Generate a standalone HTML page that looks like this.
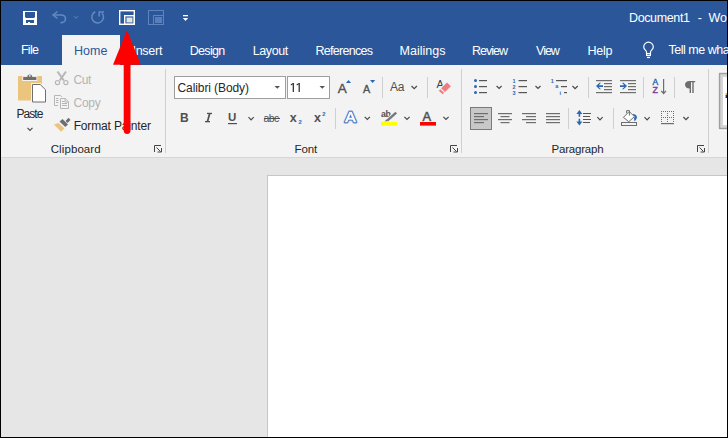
<!DOCTYPE html>
<html><head><meta charset="utf-8">
<style>
*{margin:0;padding:0;box-sizing:border-box}
html,body{width:728px;height:438px;overflow:hidden;background:#000}
body{position:relative;font-family:"Liberation Sans",sans-serif}
svg{position:absolute;left:0;top:0}
text{font-family:"Liberation Sans",sans-serif;white-space:pre}
</style></head><body>
<svg width="728" height="438" viewBox="0 0 728 438">
<!-- base -->
<rect x="0" y="0" width="728" height="438" fill="#000"/>
<rect x="1" y="1" width="726" height="436" fill="#e6e6e6"/>
<rect x="1" y="1" width="726" height="64" fill="#2b579a"/>
<rect x="1" y="65" width="726" height="92" fill="#f3f3f3"/>
<rect x="1" y="157" width="726" height="1" fill="#d6d6d6"/>
<rect x="62" y="35" width="58" height="30" fill="#f3f3f3"/>
<!-- page -->
<rect x="267" y="175" width="460" height="262" fill="#c6c6c6"/>
<rect x="268" y="176" width="459" height="261" fill="#fff"/>
<g id="qat">
  <!-- save -->
  <rect x="23" y="11" width="14" height="14" fill="#fff"/>
  <path d="M25 12 H35 V17 L34 18 H26 L25 17 Z" fill="#2b579a"/>
  <rect x="26" y="20" width="8" height="3" fill="#2b579a"/>
  <rect x="28" y="22" width="2" height="1" fill="#fff"/>
  <!-- undo -->
  <g fill="none" stroke="#6689c0" stroke-width="1.5">
    <path d="M57.5 11.5 L53 15 L57.5 18.5"/>
    <path d="M53 15 H61 C64 15 65.5 17 65.5 19 C65.5 21 63.5 22.8 60.5 22.8"/>
    <path d="M74 16.3 L76 18.3 L78 16.3" stroke-width="1"/>
  </g>
  <!-- redo circular -->
  <g fill="none" stroke="#6689c0" stroke-width="1.5">
    <path d="M95.3 11.8 A5.8 5.8 0 1 0 102 13.2"/>
    <path d="M104 12 H99.2 V16.5"/>
  </g>
  <!-- window icon 1 -->
  <g fill="none" stroke="#fff" stroke-width="1.4">
    <rect x="119.7" y="10.7" width="14.6" height="13.6"/>
    <rect x="124.7" y="15.7" width="9.6" height="8.6"/>
  </g>
  <rect x="126.5" y="17.5" width="6" height="5" fill="#e4e4e4"/>
  <!-- window icon 2 (disabled) -->
  <g fill="none" stroke="#5f84bd" stroke-width="1">
    <rect x="148.5" y="10.5" width="15" height="14"/>
    <rect x="153.5" y="15.5" width="10" height="9"/>
  </g>
  <rect x="155" y="17" width="7" height="6" fill="#5a7fb8"/>
  <!-- customize -->
  <rect x="183" y="15" width="5" height="1.3" fill="#fff"/>
  <path d="M182.8 18 H188.2 L185.5 21 Z" fill="#fff"/>
  <!-- bulb -->
  <g fill="none" stroke="#fff" stroke-width="1.2">
    <path d="M646.5 53.5 V52 C646.5 50.5 643.7 49.5 643.7 47 A4.8 4.8 0 0 1 653.3 47 C653.3 49.5 650.5 50.5 650.5 52 V53.5"/>
    <rect x="646.6" y="53.6" width="3.8" height="1.9"/>
  </g>
  <rect x="647" y="56.9" width="3" height="1.2" fill="#fff"/>
</g>
<g id="clipboard">
  <!-- paste -->
  <rect x="18" y="76" width="24" height="24.5" fill="#ebc47e"/>
  <path d="M22.3 81 V76.2 H26.5 A3.4 3.4 0 0 1 33.1 76.2 H37.3 V81 Z" fill="#f3f3f3"/>
  <path d="M23.2 80 V77 H27.3 A2.5 2.5 0 0 1 32.3 77 H36.4 V80 Z" fill="#6e6e6e"/>
  <circle cx="29.8" cy="75.8" r="0.9" fill="#f3f3f3"/>
  <path d="M31 83 H40.8 L47 89.2 V103.5 H31 Z" fill="#f3f3f3"/>
  <path d="M32.5 84.5 H40.2 L45.5 89.8 V102 H32.5 Z" fill="#fff" stroke="#6e6e6e" stroke-width="1"/>
  <!-- paste chevron -->
  <path d="M27.5 127.8 L30 130.3 L32.5 127.8" fill="none" stroke="#4a4a4a" stroke-width="1.2"/>
  <!-- scissors -->
  <g fill="none" stroke="#b6b6b6">
    <path d="M57.5 71.5 L63.8 80.5" stroke-width="2"/>
    <path d="M66 71.5 L59.7 80.5" stroke-width="2"/>
    <circle cx="57.5" cy="82.6" r="2.1" stroke-width="1.2"/>
    <circle cx="65.9" cy="82.6" r="2.1" stroke-width="1.2"/>
  </g>
  <!-- copy -->
  <g fill="none" stroke="#b6b6b6" stroke-width="1">
    <path d="M54.5 105.5 V95.5 H60.5 L62 97"/>
    <path d="M58 105.5 H54.5"/>
    <path d="M56 98.5 H58.5 M56 100.5 H58.5 M56 102.5 H58.5"/>
    <path d="M60.5 108.5 V98.5 H65.3 L68.5 101.7 V108.5 Z" fill="#f3f3f3"/>
    <path d="M65 98.5 V102 H68.5"/>
    <path d="M62 101.5 H64.5 M62 103.5 H67 M62 105.5 H67"/>
  </g>
  <!-- format painter -->
  <path d="M54 124.5 L58.5 123 L64.5 128.5 L61 131.8 Z" fill="#ebc47e"/>
  <path d="M59.5 121.5 L62.5 119 L68 124.5 L65.3 127 Z" fill="#6e6e6e"/>
  <path d="M65.5 121 L68.5 117.8 L70.5 120 L67.5 123 Z" fill="#6e6e6e"/>
  <!-- launcher -->
  <g fill="none" stroke="#444" stroke-width="1">
    <path d="M154.5 152 V145.5 H161"/>
    <path d="M156.5 147.5 L160.5 151.5 M157.5 152 H161.5 V148"/>
  </g>
</g>
<g id="seps" fill="#cfcfcf">
  <rect x="165" y="69" width="1" height="84"/>
  <rect x="461" y="69" width="1" height="84"/>
  <rect x="708" y="69" width="1" height="84"/>
  <rect x="382" y="77" width="1" height="21"/>
  <rect x="427" y="77" width="1" height="21"/>
  <rect x="335" y="108" width="1" height="21"/>
  <rect x="588" y="77" width="1" height="21"/>
  <rect x="643" y="77" width="1" height="21"/>
  <rect x="674" y="77" width="1" height="21"/>
  <rect x="568" y="108" width="1" height="21"/>
  <rect x="613" y="108" width="1" height="21"/>
</g>
<g id="font">
  <rect x="174.5" y="76.5" width="111" height="22" fill="#fff" stroke="#9e9e9e"/>
  <rect x="287.5" y="76.5" width="42" height="22" fill="#fff" stroke="#9e9e9e"/>
  <g fill="#262626"><rect x="292.7" y="83" width="1.2" height="9"/><path d="M290.6 84.6 L292.9 83 V84.3 L291 85.5 Z"/><rect x="298.6" y="83" width="1.2" height="9"/><path d="M296.5 84.6 L298.8 83 V84.3 L296.9 85.5 Z"/></g>
  <path d="M274.5 86 H280 L277.25 88.8 Z" fill="#555"/>
  <path d="M319.5 86 H325 L322.25 88.8 Z" fill="#555"/>
  <!-- grow/shrink -->
  <text x="337.8" y="93.2" font-size="13.5" fill="#505050" stroke="#505050" stroke-width="0.35">A</text>
  <path d="M346 83 L348.5 80 L351 83 Z" fill="#2b67b3"/>
  <text x="362.9" y="93.2" font-size="10.8" fill="#505050" stroke="#505050" stroke-width="0.35">A</text>
  <path d="M370 80 H375.2 L372.6 83 Z" fill="#2b67b3"/>
  <!-- Aa -->
  <text x="390" y="91" font-size="12" fill="#505050" letter-spacing="-0.3">Aa</text>
  <path d="M411.5 86 L414.2 88.7 L416.9 86" fill="none" stroke="#4a4a4a" stroke-width="1.2"/>
  <!-- clear formatting -->
  <text x="436.6" y="87.8" font-size="10.8" fill="#404040">A</text>
  <path d="M447 81 L452.3 86.2 L445 93.4 L439.6 88.3 Z" fill="#f3f3f3"/>
  <path d="M447 82.4 L450.9 86.2 L445 92 L441.1 88.3 Z" fill="#f07c80"/>
  <path d="M440.3 89.2 L444.1 92.8 L442.6 94.3 L438.8 90.7 Z" fill="#f07c80"/>

  <g fill="none" stroke="#444" stroke-width="1">
    <path d="M450.5 152 V145.5 H457"/>
    <path d="M452.5 147.5 L456.5 151.5 M453.5 152 H457.5 V148"/>
  </g>
  <!-- B I U -->
  <text x="180" y="122" font-size="12" font-weight="bold" fill="#505050">B</text>
  <g fill="#505050"><rect x="207" y="112.8" width="5" height="1.3"/><rect x="205" y="121" width="5" height="1.3"/><path d="M208.8 113.5 H210.6 L208.4 121.6 H206.6 Z"/></g>
  <text x="228" y="121.3" font-size="11.5" font-weight="bold" fill="#505050">U</text>
  <rect x="228" y="123" width="9" height="1.2" fill="#505050"/>
  <path d="M248.5 117.2 L251.1 119.8 L253.7 117.2" fill="none" stroke="#4a4a4a" stroke-width="1.2"/>
  <!-- abc strikethrough -->
  <text x="263.6" y="122.2" font-size="10.5" fill="#505050" letter-spacing="-0.6">abc</text>
  <rect x="264" y="118" width="16" height="1" fill="#505050"/>
  <!-- sub/sup -->
  <text x="289.8" y="121.8" font-size="12.5" font-weight="bold" fill="#505050">x</text>
  <text x="298.6" y="124" font-size="5.8" font-weight="bold" fill="#2b67b3">2</text>
  <text x="313.9" y="121.8" font-size="12.5" font-weight="bold" fill="#505050">x</text>
  <text x="322.3" y="116" font-size="5.8" font-weight="bold" fill="#2b67b3">2</text>
  <!-- text effects A -->
  <text x="345.3" y="122.3" font-size="15.5" fill="#fff" stroke="#c5d5ee" stroke-width="4" stroke-linejoin="round" paint-order="stroke">A</text><text x="345.3" y="122.3" font-size="15.5" fill="#fff" stroke="#3a6fc0" stroke-width="2.6" stroke-linejoin="round" paint-order="stroke">A</text><text x="345.3" y="122.3" font-size="15.5" fill="#fff" stroke="#fff" stroke-width="0.4">A</text>
  <path d="M364.7 116.8 L367.3 119.4 L369.9 116.8" fill="none" stroke="#4a4a4a" stroke-width="1.2"/>
  <!-- highlight -->
  <text x="381" y="117" font-size="8.8" font-weight="bold" fill="#505050" letter-spacing="-0.3">ab</text>
  <path d="M387 120.8 L396.2 112.6" stroke="#f3f3f3" stroke-width="4.4" fill="none"/>
  <path d="M387.2 120.6 L396.2 112.6" stroke="#777" stroke-width="2.4" fill="none"/>
  <path d="M384.6 121.6 L386.4 119.4 L388 121 Z" fill="#6a6a8a"/>
  <rect x="381" y="122" width="16" height="3.6" fill="#ffff00"/>
  <path d="M404.4 116.8 L407 119.4 L409.6 116.8" fill="none" stroke="#4a4a4a" stroke-width="1.2"/>
  <!-- font color -->
  <text x="422.6" y="121.4" font-size="12.8" fill="#505050" stroke="#505050" stroke-width="0.5">A</text>
  <rect x="420" y="122" width="16" height="3.6" fill="#ff0000"/>
  <path d="M443.4 116.8 L446 119.4 L448.6 116.8" fill="none" stroke="#4a4a4a" stroke-width="1.2"/>
</g>
<g id="para">
  <!-- bullets -->
  <g fill="#2b67b3">
    <circle cx="475.5" cy="80.5" r="1.5"/>
    <circle cx="475.5" cy="86.5" r="1.5"/>
    <circle cx="475.5" cy="92.5" r="1.5"/>
  </g>
  <g fill="#555">
    <rect x="479" y="80" width="8" height="1.2"/>
    <rect x="479" y="86" width="8" height="1.2"/>
    <rect x="479" y="92" width="8" height="1.2"/>
  </g>
  <path d="M496.6 86 L499.1 88.5 L501.6 86" fill="none" stroke="#4a4a4a" stroke-width="1.2"/>
  <!-- numbering -->
  <g font-size="5.5" font-weight="bold" fill="#2b67b3">
    <text x="512.5" y="83">1</text>
    <text x="512.5" y="89">2</text>
    <text x="512.5" y="95">3</text>
  </g>
  <g fill="#555">
    <rect x="518.5" y="80" width="8.5" height="1.2"/>
    <rect x="518.5" y="86" width="8.5" height="1.2"/>
    <rect x="518.5" y="92" width="8.5" height="1.2"/>
  </g>
  <path d="M535.5 86 L538 88.5 L540.5 86" fill="none" stroke="#4a4a4a" stroke-width="1.2"/>
  <!-- multilevel -->
  <g font-size="5.5" font-weight="bold" fill="#2b67b3">
    <text x="550.8" y="83">1</text>
    <text x="555.2" y="88">a</text>
    <text x="559.5" y="95">i</text>
  </g>
  <g fill="#555">
    <rect x="556" y="80" width="11" height="1.2"/>
    <rect x="561" y="86" width="6" height="1.2"/>
    <rect x="564" y="92" width="3" height="1.2"/>
  </g>
  <path d="M572.5 86 L575.1 88.6 L577.7 86" fill="none" stroke="#4a4a4a" stroke-width="1.2"/>
  <!-- decrease indent -->
  <g fill="#6e6e6e">
    <rect x="596" y="80" width="16" height="1.2"/>
    <rect x="604" y="83" width="8" height="1.2"/>
    <rect x="604" y="86" width="8" height="1.2"/>
    <rect x="604" y="89" width="8" height="1.2"/>
    <rect x="596" y="92" width="16" height="1.2"/>
    <rect x="620" y="80" width="16" height="1.2"/>
    <rect x="628" y="83" width="8" height="1.2"/>
    <rect x="628" y="86" width="8" height="1.2"/>
    <rect x="628" y="89" width="8" height="1.2"/>
    <rect x="620" y="92" width="16" height="1.2"/>
  </g>
  <g fill="#2b67b3">
    <path d="M596 86 L599.5 82.7 H601 L598.8 85.2 H603 V87 H598.8 L601 89.3 H599.5 Z"/>
    <path d="M627 86 L623.5 82.7 H622 L624.2 85.2 H620 V87 H624.2 L622 89.3 H623.5 Z"/>
  </g>
  <!-- sort -->
  <text x="652.4" y="85.3" font-size="8.5" fill="#2b67b3" stroke="#2b67b3" stroke-width="0.4">A</text>
  <text x="652.6" y="93.4" font-size="8.8" fill="#7b3fa0" stroke="#7b3fa0" stroke-width="0.4">Z</text>
  <g fill="none" stroke="#6e6e6e" stroke-width="1.2">
    <path d="M663.6 79 V93.5"/>
    <path d="M661.2 90.8 L663.6 93.5 L666 90.8"/>
  </g>
  <!-- pilcrow -->
  <path d="M689.3 81 H695.2 V82.3 H693.7 V93 H692.3 V82.3 H691 V93 H689.6 V88.6 C686.8 88.6 685 87 685 84.8 C685 82.6 686.8 81 689.3 81 Z" fill="#6e6e6e"/>
  <!-- align buttons -->
  <rect x="470.5" y="107.5" width="21" height="22" fill="#c8c8c8" stroke="#7a7a7a"/>
  <g fill="#6e6e6e">
    <rect x="474" y="113" width="14" height="1.2"/>
    <rect x="474" y="116" width="10" height="1.2"/>
    <rect x="474" y="119" width="14" height="1.2"/>
    <rect x="474" y="122" width="10" height="1.2"/>
    <rect x="498" y="113" width="14" height="1.2"/>
    <rect x="500.5" y="116" width="9" height="1.2"/>
    <rect x="498" y="119" width="14" height="1.2"/>
    <rect x="500.5" y="122" width="9" height="1.2"/>
    <rect x="522" y="113" width="14" height="1.2"/>
    <rect x="526" y="116" width="10" height="1.2"/>
    <rect x="522" y="119" width="14" height="1.2"/>
    <rect x="526" y="122" width="10" height="1.2"/>
    <rect x="546" y="113" width="14" height="1.2"/>
    <rect x="546" y="116" width="14" height="1.2"/>
    <rect x="546" y="119" width="14" height="1.2"/>
    <rect x="546" y="122" width="14" height="1.2"/>
  </g>
  <!-- line spacing -->
  <g fill="#2b67b3">
    <path d="M579.4 110 L582.4 114 H580.2 V116.8 H578.6 V114 H576.4 Z"/>
    <path d="M579.4 125.6 L582.4 121.6 H580.2 V118.8 H578.6 V121.6 H576.4 Z"/>
  </g>
  <g fill="#555">
    <rect x="583" y="113" width="8" height="1"/>
    <rect x="583" y="116" width="7" height="1"/>
    <rect x="583" y="119" width="8" height="1"/>
    <rect x="583" y="122" width="7" height="1"/>
  </g>
  <path d="M597.4 117.2 L600 119.8 L602.6 117.2" fill="none" stroke="#4a4a4a" stroke-width="1.2"/>
  <!-- shading -->
  <g fill="none" stroke="#6e6e6e" stroke-width="1">
    <rect x="621.5" y="122.5" width="15" height="3"/>
    <path d="M629.2 111.5 L634.4 116.6 L628.8 121.7 L623.4 117.4 Z" fill="#fff"/>
    <path d="M626.6 113.2 V110.6 H629.4 V115.6"/>
  </g>
  <path d="M632.6 114 C635.5 114 637.4 115.8 636.8 118 C636.4 119.5 635.2 120.5 634.5 121.4 L634 118.5 L634.9 116.5 Z" fill="#2b67b3"/>
  <path d="M644.5 117.2 L647.1 119.8 L649.7 117.2" fill="none" stroke="#4a4a4a" stroke-width="1.2"/>
  <!-- borders -->
  <g fill="#6e6e6e">
    <rect x="661" y="111" width="1" height="1"/><rect x="663" y="111" width="1" height="1"/><rect x="665" y="111" width="1" height="1"/><rect x="667" y="111" width="1" height="1"/><rect x="669" y="111" width="1" height="1"/><rect x="671" y="111" width="1" height="1"/><rect x="673" y="111" width="1" height="1"/>
    <rect x="661" y="117" width="1" height="1"/><rect x="663" y="117" width="1" height="1"/><rect x="665" y="117" width="1" height="1"/><rect x="667" y="117" width="1" height="1"/><rect x="669" y="117" width="1" height="1"/><rect x="671" y="117" width="1" height="1"/><rect x="673" y="117" width="1" height="1"/>
    <rect x="661" y="113" width="1" height="1"/><rect x="661" y="115" width="1" height="1"/><rect x="661" y="119" width="1" height="1"/><rect x="661" y="121" width="1" height="1"/>
    <rect x="667" y="113" width="1" height="1"/><rect x="667" y="115" width="1" height="1"/><rect x="667" y="119" width="1" height="1"/><rect x="667" y="121" width="1" height="1"/>
    <rect x="673" y="113" width="1" height="1"/><rect x="673" y="115" width="1" height="1"/><rect x="673" y="119" width="1" height="1"/><rect x="673" y="121" width="1" height="1"/>
    <rect x="661" y="123" width="13" height="1.2"/>
  </g>
  <path d="M683.4 117 L686 119.6 L688.6 117" fill="none" stroke="#4a4a4a" stroke-width="1.2"/>
  <!-- launcher -->
  <g fill="none" stroke="#444" stroke-width="1">
    <path d="M697.5 152 V145.5 H704"/>
    <path d="M699.5 147.5 L703.5 151.5 M700.5 152 H704.5 V148"/>
  </g>
  <!-- styles gallery -->
  <rect x="718" y="71.5" width="9" height="59" fill="#fbfbfb"/>
  <rect x="719.5" y="73.5" width="10" height="55" fill="#d6d6d6" stroke="#a0a0a0" stroke-width="1.5"/>
  <rect x="723" y="77" width="4" height="48" fill="#fff"/>
  <rect x="725.6" y="93" width="1.4" height="2.2" fill="#f0b040"/>
  <rect x="725.6" y="95" width="1.4" height="3" fill="#1f2f60"/>
  <rect x="727" y="64" width="1" height="100" fill="#000"/>
</g>

<text x="629.00" y="22" font-size="12.5" fill="#fff" letter-spacing="-0.371" >Document1</text>
<text x="697.70" y="22" font-size="12.5" fill="#fff" letter-spacing="0.000" >-</text>
<text x="708.40" y="22" font-size="12.5" fill="#fff" letter-spacing="0.000" >Wo</text>
<text x="20.90" y="54" font-size="12.5" fill="#fff" letter-spacing="-0.663" >File</text>
<text x="73.90" y="55" font-size="12.5" fill="#2b579a" letter-spacing="0.069" >Home</text>
<text x="132.50" y="55" font-size="12.5" fill="#fff" letter-spacing="-0.278" >Insert</text>
<text x="189.70" y="55" font-size="12.5" fill="#fff" letter-spacing="-0.672" >Design</text>
<text x="252.80" y="55" font-size="12.5" fill="#fff" letter-spacing="-0.432" >Layout</text>
<text x="315.50" y="55" font-size="12.5" fill="#fff" letter-spacing="-0.708" >References</text>
<text x="399.50" y="55" font-size="12.5" fill="#fff" letter-spacing="0.029" >Mailings</text>
<text x="471.90" y="55" font-size="12.5" fill="#fff" letter-spacing="-0.992" >Review</text>
<text x="536.10" y="55" font-size="12.5" fill="#fff" letter-spacing="-1.047" >View</text>
<text x="587.50" y="55" font-size="12.5" fill="#fff" letter-spacing="-0.252" >Help</text>
<text x="668.60" y="54" font-size="12.5" fill="#fff" letter-spacing="-0.499" >Tell me what you want to do</text>
<text x="16.40" y="117.5" font-size="12" fill="#262626" letter-spacing="-0.903" >Paste</text>
<text x="73.50" y="83.5" font-size="12" fill="#b4b4b4" letter-spacing="-0.420" >Cut</text>
<text x="73.50" y="106.5" font-size="12" fill="#b4b4b4" letter-spacing="-0.238" >Copy</text>
<text x="73.70" y="129.5" font-size="12" fill="#262626" letter-spacing="-0.159" >Format Painter</text>
<text x="50.70" y="153" font-size="11.5" fill="#262626" letter-spacing="0.097" >Clipboard</text>
<text x="177.50" y="92" font-size="12" fill="#262626" letter-spacing="-0.091" >Calibri (Body)</text>
<text x="294.60" y="153" font-size="11.5" fill="#262626" letter-spacing="-0.172" >Font</text>
<text x="551.50" y="153" font-size="11.5" fill="#262626" letter-spacing="-0.201" >Paragraph</text>
<g id="arrow" fill="#ff0000"><path d="M127 30 L140.8 64.7 H113 Z"/><path d="M123.7 64 H130.5 V130.6 A3.4 3.4 0 0 1 123.7 130.6 Z"/></g>
</svg>
</body></html>
